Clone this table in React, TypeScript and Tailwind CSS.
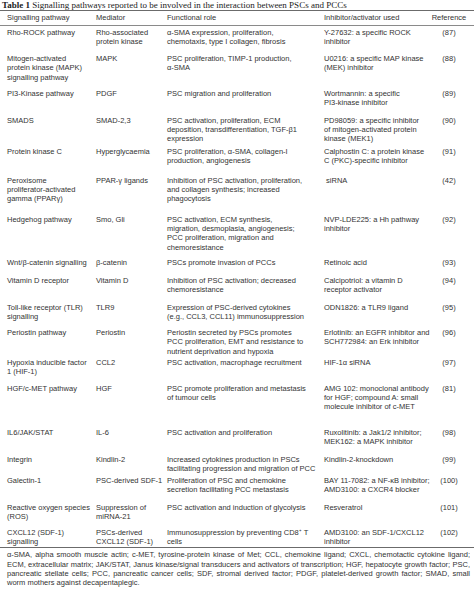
type Row = {
  h: string;
  path: string[];
  med: string[];
  role: string[];
  inh: string[];
  ref: string;
};

const rows: Row[] = [
  {
    h: "h-[26px]",
    path: ["Rho-ROCK pathway"],
    med: ["Rho-associated", "protein kinase"],
    role: ["α-SMA expression, proliferation,", "chemotaxis, type I collagen, fibrosis"],
    inh: ["Y-27632: a specific ROCK", "inhibitor"],
    ref: "(87)",
  },
  {
    h: "h-[35px]",
    path: ["Mitogen-activated", "protein kinase (MAPK)", "signalling pathway"],
    med: ["MAPK"],
    role: ["PSC proliferation, TIMP-1 production,", "α-SMA"],
    inh: ["U0216: a specific MAP kinase", "(MEK) inhibitor"],
    ref: "(88)",
  },
  {
    h: "h-[26.4px]",
    path: ["PI3-Kinase pathway"],
    med: ["PDGF"],
    role: ["PSC migration and proliferation"],
    inh: ["Wortmannin: a specific", "PI3-kinase inhibitor"],
    ref: "(89)",
  },
  {
    h: "h-[31px]",
    path: ["SMADS"],
    med: ["SMAD-2,3"],
    role: ["PSC activation, proliferation, ECM", "deposition, transdifferentiation, TGF-β1", "expression"],
    inh: ["PD98059: a specific inhibitor", "of mitogen-activated protein", "kinase (MEK1)"],
    ref: "(90)",
  },
  {
    h: "h-[29.3px]",
    path: ["Protein kinase C"],
    med: ["Hyperglycaemia"],
    role: ["PSC proliferation, α-SMA, collagen-I", "production, angiogenesis"],
    inh: ["Calphostin C: a protein kinase", "C (PKC)-specific inhibitor"],
    ref: "(91)",
  },
  {
    h: "h-[39px]",
    path: ["Peroxisome", "proliferator-activated", "gamma (PPARγ)"],
    med: ["PPAR-γ ligands"],
    role: ["Inhibition of PSC activation, proliferation,", "and collagen synthesis; increased", "phagocytosis"],
    inh: ["\u00a0siRNA"],
    ref: "(42)",
  },
  {
    h: "h-[43.3px]",
    path: ["Hedgehog pathway"],
    med: ["Smo, Gli"],
    role: [
      "PSC activation, ECM synthesis,",
      "migration, desmoplasia, angiogenesis;",
      "PCC proliferation, migration and",
      "chemoresistance",
    ],
    inh: ["NVP-LDE225: a Hh pathway", "inhibitor"],
    ref: "(92)",
  },
  {
    h: "h-[17.7px]",
    path: ["Wnt/β-catenin signalling"],
    med: ["β-catenin"],
    role: ["PSCs promote invasion of PCCs"],
    inh: ["Retinoic acid"],
    ref: "(93)",
  },
  {
    h: "h-[27.3px]",
    path: ["Vitamin D receptor"],
    med: ["Vitamin D"],
    role: ["Inhibition of PSC activation; decreased", "chemoresistance"],
    inh: ["Calcipotriol: a vitamin D", "receptor activator"],
    ref: "(94)",
  },
  {
    h: "h-[25px]",
    path: ["Toll-like receptor (TLR)", "signalling"],
    med: ["TLR9"],
    role: ["Expression of PSC-derived cytokines", "(e.g., CCL3, CCL11) immunosuppression"],
    inh: ["ODN1826: a TLR9 ligand"],
    ref: "(95)",
  },
  {
    h: "h-[30px]",
    path: ["Periostin pathway"],
    med: ["Periostin"],
    role: ["Periostin secreted by PSCs promotes", "PCC proliferation, EMT and resistance to", "nutrient deprivation and hypoxia"],
    inh: ["Erlotinib: an EGFR inhibitor and", "SCH772984: an Erk inhibitor"],
    ref: "(96)",
  },
  {
    h: "h-[25.7px]",
    path: ["Hypoxia inducible factor", "1 (HIF-1)"],
    med: ["CCL2"],
    role: ["PSC activation, macrophage recruitment"],
    inh: ["HIF-1α siRNA"],
    ref: "(97)",
  },
  {
    h: "h-[44px]",
    path: ["HGF/c-MET pathway"],
    med: ["HGF"],
    role: ["PSC promote proliferation and metastasis", "of tumour cells"],
    inh: ["AMG 102: monoclonal antibody", "for HGF; compound A: small", "molecule inhibitor of c-MET"],
    ref: "(81)",
  },
  {
    h: "h-[27px]",
    path: ["IL6/JAK/STAT"],
    med: ["IL-6"],
    role: ["PSC activation and proliferation"],
    inh: ["Ruxolitinib: a Jak1/2 inhibitor;", "MEK162: a MAPK inhibitor"],
    ref: "(98)",
  },
  {
    h: "h-[21px]",
    path: ["Integrin"],
    med: ["Kindlin-2"],
    role: ["Increased cytokines production in PSCs", "facilitating progression and migration of PCC"],
    inh: ["Kindlin-2-knockdown"],
    ref: "(99)",
  },
  {
    h: "h-[27px]",
    path: ["Galectin-1"],
    med: ["PSC-derived SDF-1"],
    role: ["Proliferation of PSC and chemokine", "secretion facilitating PCC metastasis"],
    inh: ["BAY 11-7082: a NF-κB inhibitor;", "AMD3100: a CXCR4 blocker"],
    ref: "(100)",
  },
  {
    h: "h-[25px]",
    path: ["Reactive oxygen species", "(ROS)"],
    med: ["Suppression of", "miRNA-21"],
    role: ["PSC activation and induction of glycolysis"],
    inh: ["Resveratrol"],
    ref: "(101)",
  },
  {
    h: "h-[22.3px]",
    path: ["CXCL12 (SDF-1)", "signalling"],
    med: ["PSCs-derived", "CXCL12 (SDF-1)"],
    role: ["Immunosuppression by preventing CD8⁺ T", "cells"],
    inh: ["AMD3100: an SDF-1/CXCL12", "inhibitor"],
    ref: "(102)",
  },
];

const cols = "grid grid-cols-[89px_71px_157px_100px_1fr] pl-[7px]";

function Lines({ lines }: { lines: string[] }) {
  return (
    <div className="whitespace-nowrap">
      {lines.map((l, i) => (
        <div key={i}>{l}</div>
      ))}
    </div>
  );
}

export default function App() {
  return (
    <div className="h-[594px] w-[474px] overflow-hidden bg-white text-[#333] font-['Liberation_Sans',Arial,sans-serif] text-[7.5px] leading-[9.3px]">
      <div className="h-[10px] whitespace-nowrap pl-[2px] font-['Liberation_Serif','Times_New_Roman',serif] text-[9px] leading-[10px] text-[#222]">
        <span className="font-bold">Table 1</span> Signalling pathways reported to be involved in the interaction between PSCs and PCCs
      </div>
      <div className="border-t-[1.5px] border-[#6b6b6b]" />
      <div className={`${cols} h-[13.5px] pt-[1.5px]`}>
        <div>Signalling pathway</div>
        <div>Mediator</div>
        <div>Functional role</div>
        <div>Inhibitor/activator used</div>
        <div className="text-center">Reference</div>
      </div>
      <div className="border-t border-[#8a8a8a]" />
      {rows.map((r) => (
        <div key={r.ref} className={`${cols} ${r.h} pt-[2.7px]`}>
          <Lines lines={r.path} />
          <Lines lines={r.med} />
          <Lines lines={r.role} />
          <Lines lines={r.inh} />
          <div className="text-center">{r.ref}</div>
        </div>
      ))}
      <div className="border-t-[1.5px] border-[#6b6b6b]" />
      <div className="pl-[7px] pr-[4px] pt-[2px] leading-[9.2px]">
        <div className="text-justify [text-align-last:justify]">
          α-SMA, alpha smooth muscle actin; c-MET, tyrosine-protein kinase of Met; CCL, chemokine ligand; CXCL, chemotactic cytokine ligand;
        </div>
        <div className="text-justify [text-align-last:justify]">
          ECM, extracellular matrix; JAK/STAT, Janus kinase/signal transducers and activators of transcription; HGF, hepatocyte growth factor; PSC,
        </div>
        <div className="text-justify [text-align-last:justify]">
          pancreatic stellate cells; PCC, pancreatic cancer cells; SDF, stromal derived factor; PDGF, platelet-derived growth factor; SMAD, small
        </div>
        <div>worm mothers against decapentaplegic.</div>
      </div>
    </div>
  );
}
